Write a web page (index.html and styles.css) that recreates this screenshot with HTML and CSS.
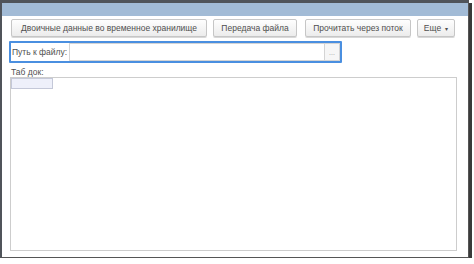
FILE: index.html
```html
<!DOCTYPE html>
<html>
<head>
<meta charset="utf-8">
<link rel="stylesheet" href="styles.css">
</head>
<body>
<div class="window">
  <div class="titlebar"></div>
  <div class="content">
    <div class="toolbar">
      <button class="btn b1">Двоичные данные во временное хранилище</button>
      <button class="btn b2">Передача файла</button>
      <button class="btn b3">Прочитать через поток</button>
      <button class="btn b4">Еще<span class="caret">▾</span></button>
    </div>
    <div class="pathrow">
      <span class="label">Путь к файлу:</span>
      <div class="field"><div class="input"></div><div class="choose">...</div></div>
    </div>
    <div class="tablabel">Таб док:</div>
    <div class="sheet"><div class="cell"></div></div>
  </div>
</div>
</body>
</html>
```
FILE: styles.css
```css
html, body { margin: 0; padding: 0; background: #fff; }
body { font-family: "Liberation Sans", Arial, sans-serif; font-size: 8.5px; color: #4f4f4f; }
.window {
  width: 466px; height: 254px;
  border-top: 3px solid #50545a;
  border-left: 2px solid #50545a;
  border-right: 1px solid #555;
  border-bottom: 1px solid #555;
  box-shadow: 3px 3px 0 #3a3a3a;
  background: #fff;
  display: flex; flex-direction: column;
}
.titlebar { height: 13px; background: #a2bbd6; }
.content { padding: 3px 0 0 7px; display: flex; flex-direction: column; flex: 1; }
.toolbar { display: flex; gap: 6px; height: 18px; }
.btn {
  font-family: inherit; font-size: 8.5px; color: #4f4f4f;
  height: 18px; padding: 0; margin: 0; white-space: nowrap;
  border: 1px solid #c6c6c6; border-radius: 2px;
  background: linear-gradient(#fefefe, #ececec);
  box-shadow: 0 1px 0 #d8d8d8;
}
.b1 { width: 196px; margin-left: 2px; }
.b2 { width: 84px; }
.b3 { width: 106px; margin-left: 2px; }
.b4 { width: 38px; }
.caret { font-size: 6px; margin-left: 4px; }
.pathrow {
  margin-top: 4px; width: 328px; height: 18px;
  border: 2px solid #4a8fe0; border-radius: 1px;
  display: flex; align-items: center; padding: 0 0 0 1px;
  background: #fff;
}
.label { width: 57px; white-space: nowrap; }
.field { flex: 1; display: flex; height: 16px; border: 1px solid #d4d4d4; }
.input { flex: 1; background: #fff; }
.choose {
  width: 14px; border-left: 1px solid #d4d4d4; background: #f6f6f6;
  color: #999; font-size: 7px; text-align: center; line-height: 18px;
}
.tablabel { margin-top: 4px; margin-left: 2px; height: 10px; line-height: 10px; }
.sheet {
  margin-left: 1px; width: 445px; height: 172px;
  border: 1px solid #cdcdcd;
}
.cell { width: 40px; height: 9px; background: #eef0fa; border: 1px solid #c4c8d8; }
```
